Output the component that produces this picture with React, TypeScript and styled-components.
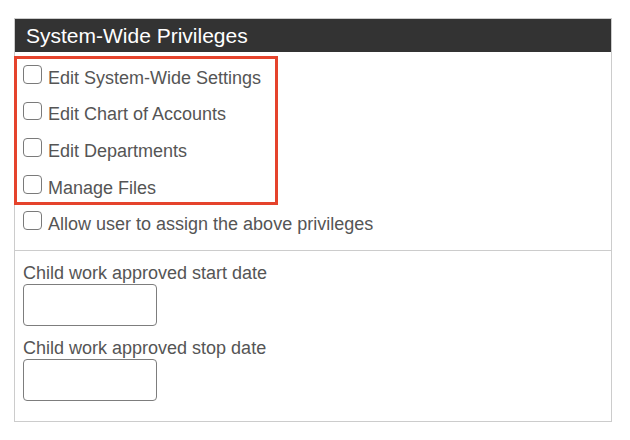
import React from "react";
import styled, { createGlobalStyle } from "styled-components";

const GlobalStyle = createGlobalStyle`
  html, body {
    margin: 0;
    padding: 0;
    background: #ffffff;
  }

  body {
    font-family: "Liberation Sans", Arial, sans-serif;
    color: #555555;
  }
`;

const Page = styled.div`
  padding: 18px 0 0 14px;
`;

const Panel = styled.section`
  box-sizing: border-box;
  width: 598px;
  border: 1px solid #cccccc;
  background: #ffffff;
`;

const PanelHeader = styled.h2`
  margin: 0;
  height: 33px;
  padding-left: 11px;
  background: #333333;
  color: #ffffff;
  font-size: 21px;
  font-weight: normal;
  line-height: 33px;
`;

const HighlightGroup = styled.div`
  box-sizing: border-box;
  width: 264px;
  margin: 4px 0 0 -1px;
  padding: 8.8px 0 3.1px 6px;
  border: 3px solid #e5432c;
`;

const CheckRow = styled.label<{ $indent?: number; $offset?: number }>`
  display: flex;
  align-items: flex-start;
  gap: 6px;
  margin-top: ${(p) => p.$offset ?? 0}px;
  padding-left: ${(p) => p.$indent ?? 0}px;
  font-size: 18px;
  line-height: 21px;
  color: #555555;

  & + & {
    margin-top: 15.7px;
  }
`;

const Box = styled.input.attrs({ type: "checkbox" })`
  appearance: none;
  flex: none;
  box-sizing: border-box;
  width: 19px;
  height: 18.5px;
  margin: -2.8px 0 0 0;
  border: 1.3px solid #7a7a7a;
  border-radius: 4px;
  background: #ffffff;
`;

const Divider = styled.hr`
  margin: 15px 0 0 0;
  border: 0;
  border-top: 1px solid #cccccc;
`;

const Fields = styled.div`
  display: flex;
  flex-direction: column;
  align-items: flex-start;
  padding: 12.25px 8px 20px 8px;
`;

const FieldLabel = styled.label<{ $gap?: number }>`
  margin-top: ${(p) => p.$gap ?? 0}px;
  font-size: 18px;
  line-height: 21px;
  color: #555555;
`;

const DateInput = styled.input.attrs({ type: "text" })`
  box-sizing: border-box;
  width: 134px;
  height: 41.5px;
  margin-top: 0;
  border: 1px solid #7d7d7d;
  border-radius: 4px;
  background: #ffffff;
`;

const privileges = [
  "Edit System-Wide Settings",
  "Edit Chart of Accounts",
  "Edit Departments",
  "Manage Files",
];

export default function App() {
  return (
    <Page>
      <GlobalStyle />
      <Panel>
        <PanelHeader>System-Wide Privileges</PanelHeader>
        <HighlightGroup>
          {privileges.map((name) => (
            <CheckRow key={name}>
              <Box />
              {name}
            </CheckRow>
          ))}
        </HighlightGroup>
        <CheckRow $indent={8} $offset={9.1}>
          <Box />
          Allow user to assign the above privileges
        </CheckRow>
        <Divider />
        <Fields>
          <FieldLabel>Child work approved start date</FieldLabel>
          <DateInput />
          <FieldLabel $gap={12.5}>Child work approved stop date</FieldLabel>
          <DateInput />
        </Fields>
      </Panel>
    </Page>
  );
}
